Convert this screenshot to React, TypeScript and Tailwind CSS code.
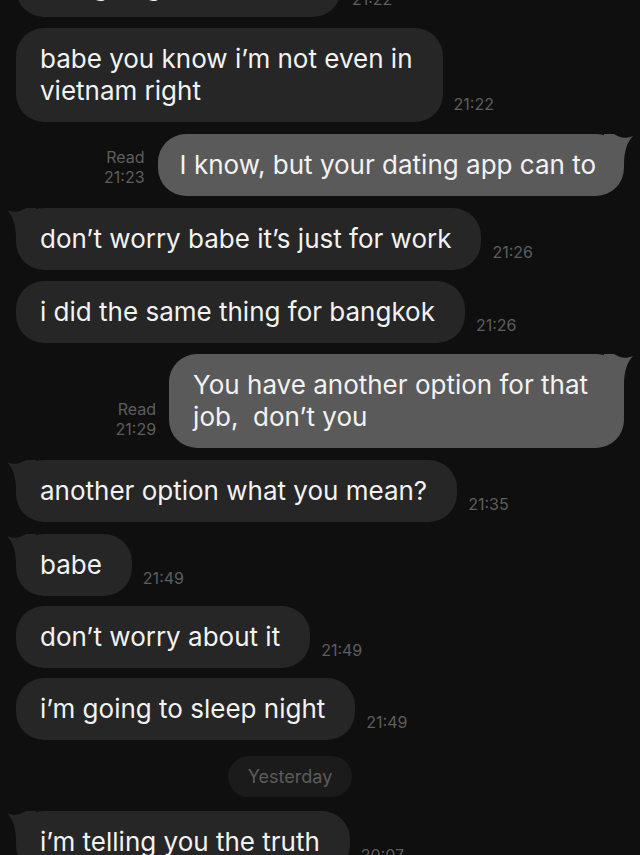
import React from "react";

type Msg =
  | { kind: "in"; lines: string[]; time: string; tail?: boolean; mt: string }
  | { kind: "out"; lines: string[]; time: string; tail?: boolean; mt: string; pad: string }
  | { kind: "day"; label: string; mt: string };

const messages: Msg[] = [
  { kind: "in", lines: ["you going to the party"], time: "21:22", mt: "mt-0" },
  { kind: "in", lines: ["babe you know i’m not even in", "vietnam right"], time: "21:22", mt: "mt-[11px]" },
  { kind: "out", lines: ["I know, but your dating app can to"], time: "21:23", tail: true, mt: "mt-[12px]", pad: "pl-[22px] pr-[28px]" },
  { kind: "in", lines: ["don’t worry babe it’s just for work"], time: "21:26", tail: true, mt: "mt-[12px]" },
  { kind: "in", lines: ["i did the same thing for bangkok"], time: "21:26", mt: "mt-[11px]" },
  { kind: "out", lines: ["You have another option for that", "job,  don’t you"], time: "21:29", tail: true, mt: "mt-[11px]", pad: "pl-6 pr-[36px]" },
  { kind: "in", lines: ["another option what you mean?"], time: "21:35", tail: true, mt: "mt-[12px]" },
  { kind: "in", lines: ["babe"], time: "21:49", tail: true, mt: "mt-[12px]" },
  { kind: "in", lines: ["don’t worry about it"], time: "21:49", mt: "mt-[10px]" },
  { kind: "in", lines: ["i’m going to sleep night"], time: "21:49", mt: "mt-[10px]" },
  { kind: "day", label: "Yesterday", mt: "mt-[16px]" },
  { kind: "in", lines: ["i’m telling you the truth"], time: "20:07", tail: true, mt: "mt-[14px]" },
];

function Tail({ color, flip }: { color: string; flip?: boolean }) {
  return (
    <svg
      width="30"
      height="30"
      viewBox="0 0 30 30"
      className={`absolute top-0 ${flip ? "-right-[10px] -scale-x-100" : "-left-[10px]"}`}
    >
      <path d="M1 2 C8 5 14 4 20 0 L30 0 L30 30 L10 30 C10 18 7 8 1 2 Z" fill={color} />
    </svg>
  );
}

function Lines({ lines }: { lines: string[] }) {
  return (
    <>
      {lines.map((l, i) => (
        <span key={i} className="block whitespace-pre">
          {l}
        </span>
      ))}
    </>
  );
}

export default function App() {
  return (
    <div
      className="h-[855px] w-[640px] overflow-hidden bg-[#0f0f0f]"
      style={{ fontFamily: "Inter, 'Liberation Sans', sans-serif" }}
    >
      <div className="-mt-[45px] flex flex-col px-4">
        {messages.map((m, i) => {
          if (m.kind === "day") {
            return (
              <div key={i} className={`${m.mt} ml-[212px] flex h-[41px] w-[124px] items-center justify-center rounded-full bg-[#1b1b1b] text-[18px] text-[#5c5c5c]`}>
                {m.label}
              </div>
            );
          }
          if (m.kind === "out") {
            return (
              <div key={i} className={`${m.mt} flex items-end justify-end`}>
                <div className="mb-[9px] mr-[13px] text-right text-[16px] leading-[20px] text-[#5e5e5e]">
                  <div>Read</div>
                  <div>{m.time}</div>
                </div>
                <div className={`relative rounded-[28px] bg-[#5a5a5a] py-[15px] ${m.pad} text-[26px] leading-[32px] text-[#f2f2f2]`}>
                  {m.tail && <Tail color="#5a5a5a" flip />}
                  <span className="relative">
                    <Lines lines={m.lines} />
                  </span>
                </div>
              </div>
            );
          }
          return (
            <div key={i} className={`${m.mt} flex items-end`}>
              <div className="relative rounded-[28px] bg-[#262626] py-[15px] pl-6 pr-[30px] text-[26px] leading-[32px] text-[#f2f2f2]">
                {m.tail && <Tail color="#262626" />}
                <span className="relative">
                  <Lines lines={m.lines} />
                </span>
              </div>
              <div className="mb-[10px] ml-[11px] text-[16px] leading-[16px] text-[#5e5e5e]">{m.time}</div>
            </div>
          );
        })}
      </div>
    </div>
  );
}
